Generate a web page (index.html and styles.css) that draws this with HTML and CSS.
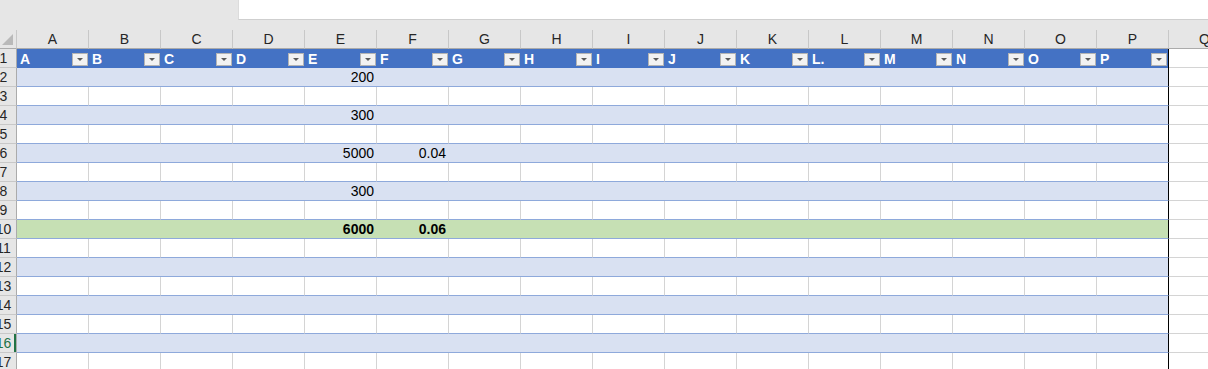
FILE: index.html
```html
<!DOCTYPE html>
<html>
<head>
<meta charset="utf-8">
<link rel="stylesheet" href="styles.css">
</head>
<body>
<div class="sheet">
  <div class="topbar"><div class="fx"></div></div>
  <div class="row colhead">
    <div class="corner"><svg width="16" height="18" viewBox="0 0 16 18"><polygon points="13,4 13,15 2,15" fill="#b9b9b9"/></svg></div>
    <div class="ch">A</div><div class="ch">B</div><div class="ch">C</div><div class="ch">D</div><div class="ch">E</div><div class="ch">F</div><div class="ch">G</div><div class="ch">H</div><div class="ch">I</div><div class="ch">J</div><div class="ch">K</div><div class="ch">L</div><div class="ch">M</div><div class="ch">N</div><div class="ch">O</div><div class="ch">P</div><div class="ch">Q</div>
  </div>
  <div class="row thead">
    <div class="rh"><span>1</span></div>
    <div class="th"><span>A</span><b class="dd"></b></div><div class="th"><span>B</span><b class="dd"></b></div><div class="th"><span>C</span><b class="dd"></b></div><div class="th"><span>D</span><b class="dd"></b></div><div class="th"><span>E</span><b class="dd"></b></div><div class="th"><span>F</span><b class="dd"></b></div><div class="th"><span>G</span><b class="dd"></b></div><div class="th"><span>H</span><b class="dd"></b></div><div class="th"><span>I</span><b class="dd"></b></div><div class="th"><span>J</span><b class="dd"></b></div><div class="th"><span>K</span><b class="dd"></b></div><div class="th"><span>L.</span><b class="dd"></b></div><div class="th"><span>M</span><b class="dd"></b></div><div class="th"><span>N</span><b class="dd"></b></div><div class="th"><span>O</span><b class="dd"></b></div><div class="th last"><span>P</span><b class="dd"></b></div>
    <div class="q"></div>
  </div>
  <div class="row band"><div class="rh"><span>2</span></div><div class="c"></div><div class="c"></div><div class="c"></div><div class="c"></div><div class="c num">200</div><div class="c"></div><div class="c"></div><div class="c"></div><div class="c"></div><div class="c"></div><div class="c"></div><div class="c"></div><div class="c"></div><div class="c"></div><div class="c"></div><div class="c last"></div><div class="q"></div></div>
  <div class="row plain"><div class="rh"><span>3</span></div><div class="c"></div><div class="c"></div><div class="c"></div><div class="c"></div><div class="c"></div><div class="c"></div><div class="c"></div><div class="c"></div><div class="c"></div><div class="c"></div><div class="c"></div><div class="c"></div><div class="c"></div><div class="c"></div><div class="c"></div><div class="c last"></div><div class="q"></div></div>
  <div class="row band"><div class="rh"><span>4</span></div><div class="c"></div><div class="c"></div><div class="c"></div><div class="c"></div><div class="c num">300</div><div class="c"></div><div class="c"></div><div class="c"></div><div class="c"></div><div class="c"></div><div class="c"></div><div class="c"></div><div class="c"></div><div class="c"></div><div class="c"></div><div class="c last"></div><div class="q"></div></div>
  <div class="row plain"><div class="rh"><span>5</span></div><div class="c"></div><div class="c"></div><div class="c"></div><div class="c"></div><div class="c"></div><div class="c"></div><div class="c"></div><div class="c"></div><div class="c"></div><div class="c"></div><div class="c"></div><div class="c"></div><div class="c"></div><div class="c"></div><div class="c"></div><div class="c last"></div><div class="q"></div></div>
  <div class="row band"><div class="rh"><span>6</span></div><div class="c"></div><div class="c"></div><div class="c"></div><div class="c"></div><div class="c num">5000</div><div class="c num">0.04</div><div class="c"></div><div class="c"></div><div class="c"></div><div class="c"></div><div class="c"></div><div class="c"></div><div class="c"></div><div class="c"></div><div class="c"></div><div class="c last"></div><div class="q"></div></div>
  <div class="row plain"><div class="rh"><span>7</span></div><div class="c"></div><div class="c"></div><div class="c"></div><div class="c"></div><div class="c"></div><div class="c"></div><div class="c"></div><div class="c"></div><div class="c"></div><div class="c"></div><div class="c"></div><div class="c"></div><div class="c"></div><div class="c"></div><div class="c"></div><div class="c last"></div><div class="q"></div></div>
  <div class="row band"><div class="rh"><span>8</span></div><div class="c"></div><div class="c"></div><div class="c"></div><div class="c"></div><div class="c num">300</div><div class="c"></div><div class="c"></div><div class="c"></div><div class="c"></div><div class="c"></div><div class="c"></div><div class="c"></div><div class="c"></div><div class="c"></div><div class="c"></div><div class="c last"></div><div class="q"></div></div>
  <div class="row plain"><div class="rh"><span>9</span></div><div class="c"></div><div class="c"></div><div class="c"></div><div class="c"></div><div class="c"></div><div class="c"></div><div class="c"></div><div class="c"></div><div class="c"></div><div class="c"></div><div class="c"></div><div class="c"></div><div class="c"></div><div class="c"></div><div class="c"></div><div class="c last"></div><div class="q"></div></div>
  <div class="row total"><div class="rh"><span>10</span></div><div class="c"></div><div class="c"></div><div class="c"></div><div class="c"></div><div class="c num">6000</div><div class="c num">0.06</div><div class="c"></div><div class="c"></div><div class="c"></div><div class="c"></div><div class="c"></div><div class="c"></div><div class="c"></div><div class="c"></div><div class="c"></div><div class="c last"></div><div class="q"></div></div>
  <div class="row plain"><div class="rh"><span>11</span></div><div class="c"></div><div class="c"></div><div class="c"></div><div class="c"></div><div class="c"></div><div class="c"></div><div class="c"></div><div class="c"></div><div class="c"></div><div class="c"></div><div class="c"></div><div class="c"></div><div class="c"></div><div class="c"></div><div class="c"></div><div class="c last"></div><div class="q"></div></div>
  <div class="row band"><div class="rh"><span>12</span></div><div class="c"></div><div class="c"></div><div class="c"></div><div class="c"></div><div class="c"></div><div class="c"></div><div class="c"></div><div class="c"></div><div class="c"></div><div class="c"></div><div class="c"></div><div class="c"></div><div class="c"></div><div class="c"></div><div class="c"></div><div class="c last"></div><div class="q"></div></div>
  <div class="row plain"><div class="rh"><span>13</span></div><div class="c"></div><div class="c"></div><div class="c"></div><div class="c"></div><div class="c"></div><div class="c"></div><div class="c"></div><div class="c"></div><div class="c"></div><div class="c"></div><div class="c"></div><div class="c"></div><div class="c"></div><div class="c"></div><div class="c"></div><div class="c last"></div><div class="q"></div></div>
  <div class="row band"><div class="rh"><span>14</span></div><div class="c"></div><div class="c"></div><div class="c"></div><div class="c"></div><div class="c"></div><div class="c"></div><div class="c"></div><div class="c"></div><div class="c"></div><div class="c"></div><div class="c"></div><div class="c"></div><div class="c"></div><div class="c"></div><div class="c"></div><div class="c last"></div><div class="q"></div></div>
  <div class="row plain"><div class="rh"><span>15</span></div><div class="c"></div><div class="c"></div><div class="c"></div><div class="c"></div><div class="c"></div><div class="c"></div><div class="c"></div><div class="c"></div><div class="c"></div><div class="c"></div><div class="c"></div><div class="c"></div><div class="c"></div><div class="c"></div><div class="c"></div><div class="c last"></div><div class="q"></div></div>
  <div class="row band"><div class="rh active"><span>16</span></div><div class="c"></div><div class="c"></div><div class="c"></div><div class="c"></div><div class="c"></div><div class="c"></div><div class="c"></div><div class="c"></div><div class="c"></div><div class="c"></div><div class="c"></div><div class="c"></div><div class="c"></div><div class="c"></div><div class="c"></div><div class="c last"></div><div class="q"></div></div>
  <div class="row plain"><div class="rh"><span>17</span></div><div class="c"></div><div class="c"></div><div class="c"></div><div class="c"></div><div class="c"></div><div class="c"></div><div class="c"></div><div class="c"></div><div class="c"></div><div class="c"></div><div class="c"></div><div class="c"></div><div class="c"></div><div class="c"></div><div class="c"></div><div class="c last"></div><div class="q"></div></div>
</div>
</body>
</html>
```
FILE: styles.css
```css
* { box-sizing: border-box; }
html, body { margin: 0; padding: 0; }
body {
  width: 1208px;
  height: 369px;
  overflow: hidden;
  background: #ffffff;
  font-family: "Liberation Sans", Arial, sans-serif;
  font-size: 14px;
  color: #000;
}
.sheet { width: 1208px; }

.topbar {
  height: 30px;
  background: #e6e6e6;
  padding-left: 238px;
}
.fx {
  height: 20px;
  background: #ffffff;
  border-bottom: 1px solid #cfcfcf;
  border-left: 1px solid #dcdcdc;
}

.row {
  display: grid;
  grid-template-columns: 17px repeat(16, 72px) 72px;
  height: 19px;
  white-space: nowrap;
}

/* column header */
.colhead { background: #e6e6e6; }
.corner {
  border-right: 1px solid #c8c8c8;
  border-bottom: 1px solid #ababab;
}
.corner svg { display: block; }
.ch {
  border-right: 1px solid #c8c8c8;
  border-bottom: 1px solid #ababab;
  text-align: center;
  line-height: 18px;
  color: #262626;
}

/* row header */
.rh {
  background: #e6e6e6;
  border-right: 1px solid #ababab;
  border-bottom: 1px solid #c8c8c8;
  overflow: hidden;
  position: relative;
}
.rh span {
  display: block;
  width: 23px;
  margin-left: -8px;
  text-align: center;
  line-height: 19px;
  color: #262626;
}
.rh.active { box-shadow: inset -2px 0 0 #217346; }
.rh.active span { color: #217346; }

/* table header */
.th {
  background: #4472c4;
  color: #ffffff;
  font-weight: bold;
  display: flex;
  align-items: center;
  justify-content: space-between;
  padding: 0 1px 0 3px;
}
.th.last { border-right: 1px solid #000; }
.dd {
  align-self: flex-start;
  width: 16px;
  height: 13px;
  margin-top: 4px;
  background: #f2f2f2;
  border: 1px solid #b4b4b4;
  display: flex;
  align-items: center;
  justify-content: center;
}
.dd::after {
  content: "";
  width: 0;
  height: 0;
  border-left: 3px solid transparent;
  border-right: 3px solid transparent;
  border-top: 3px solid #5a5a5a;
}

/* body cells */
.c {
  border-bottom: 1px solid #8ea9db;
  line-height: 18px;
}
.num { text-align: right; padding-right: 3px; }
.band .c { background: #d9e1f2; }
.plain .c { background: #ffffff; border-right: 1px solid #d4d4d4; }
.total .c { background: #c6e0b4; font-weight: bold; }
.c.last, .plain .c.last { border-right: 1px solid #000; }

.q {
  background: #ffffff;
  border-right: 1px solid #d4d4d4;
  border-bottom: 1px solid #d4d4d4;
}
```
